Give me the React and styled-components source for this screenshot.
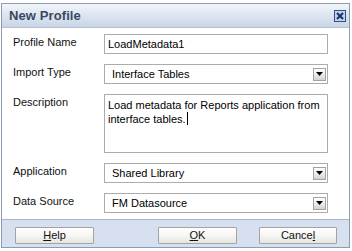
import React from "react";
import styled, { createGlobalStyle } from "styled-components";

const GlobalStyle = createGlobalStyle`
  html, body {
    margin: 0;
    padding: 0;
    background: #ffffff;
  }
  body {
    font-family: "Liberation Sans", Arial, sans-serif;
    font-size: 11px;
    color: #000;
  }
`;

const Dialog = styled.div`
  margin: 3px 0 0 1px;
  width: 347px;
  border: 1px solid #8d9bb3;
  background: #fff;
  display: flex;
  flex-direction: column;
`;

const TitleBar = styled.div`
  height: 23px;
  display: flex;
  align-items: center;
  justify-content: space-between;
  padding: 0 3px 0 7px;
  background: linear-gradient(to bottom, #f2f5fa 0%, #dfe6f1 45%, #c8d4e6 100%);
  border-bottom: 1px solid #b3c0d4;
`;

const Title = styled.span`
  font-size: 13px;
  font-weight: bold;
  color: #3a4862;
  letter-spacing: 0.1px;
`;

const CloseButton = styled.div`
  width: 12px;
  height: 12px;
  display: flex;
`;

const Body = styled.div`
  display: grid;
  grid-template-columns: 91px 224px;
  row-gap: 10px;
  padding: 6px 0 6px 11px;
  align-items: start;
`;

const Label = styled.label`
  line-height: 17px;
  color: #111;
  font-size: 11px;
`;

const TextBox = styled.div`
  box-sizing: border-box;
  height: 20px;
  border: 1px solid #acacac;
  padding: 0 3px;
  display: flex;
  align-items: center;
  font-size: 11px;
`;

const SelectBox = styled(TextBox)`
  padding: 0 1px 0 7px;
  justify-content: space-between;
`;

const AreaBox = styled.div`
  box-sizing: border-box;
  height: 59px;
  border: 1px solid #acacac;
  padding: 3px 3px;
  line-height: 14px;
  font-size: 11px;
`;

const Caret = styled.span`
  display: inline-block;
  width: 1px;
  height: 13px;
  background: #000;
  vertical-align: -2px;
  margin-left: 1px;
`;

const ArrowButton = styled.div`
  box-sizing: border-box;
  width: 13px;
  height: 13px;
  border: 1px solid #a4a4a4;
  background: linear-gradient(to bottom, #ffffff 0%, #eaeaea 55%, #d2d2d2 100%);
  display: flex;
  align-items: center;
  justify-content: center;
`;

const Footer = styled.div`
  display: flex;
  align-items: center;
  gap: 22px;
  padding: 7px 12px 3px 13px;
  background: #d6e0ee;
  border-top: 1px solid #a9b6ca;
`;

const Button = styled.button`
  box-sizing: border-box;
  width: ${(p) => p.w || 79}px;
  height: 17px;
  margin-left: ${(p) => (p.push ? "auto" : "0")};
  border: 1px solid #a3a3a3;
  border-radius: 1px;
  background: linear-gradient(to bottom, #ffffff 0%, #f6f6f4 50%, #e4e4e0 100%);
  font-family: "Liberation Sans", Arial, sans-serif;
  font-size: 11px;
  color: #111;
  padding: 0;
  line-height: 15px;
  text-align: center;
  u {
    text-decoration: underline;
  }
`;

const DownArrow = () => (
  <svg width="7" height="4" viewBox="0 0 7 4">
    <path d="M0 0 H7 L3.5 4 Z" fill="#000" />
  </svg>
);

const Select = ({ value }) => (
  <SelectBox>
    <span>{value}</span>
    <ArrowButton>
      <DownArrow />
    </ArrowButton>
  </SelectBox>
);

export default function App() {
  return (
    <>
      <GlobalStyle />
      <Dialog>
        <TitleBar>
          <Title>New Profile</Title>
          <CloseButton>
            <svg width="12" height="12" viewBox="0 0 12 12">
              <rect x="0.5" y="0.5" width="11" height="11" fill="#c6d4ea" stroke="#2f4f86" />
              <path d="M3 3 L9 9 M9 3 L3 9" stroke="#1c386b" strokeWidth="2.2" />
            </svg>
          </CloseButton>
        </TitleBar>
        <Body>
          <Label>Profile Name</Label>
          <TextBox>LoadMetadata1</TextBox>
          <Label>Import Type</Label>
          <Select value="Interface Tables" />
          <Label>Description</Label>
          <AreaBox>
            Load metadata for Reports application from interface tables.
            <Caret />
          </AreaBox>
          <Label>Application</Label>
          <Select value="Shared Library" />
          <Label>Data Source</Label>
          <Select value="FM Datasource" />
        </Body>
        <Footer>
          <Button>
            <u>H</u>elp
          </Button>
          <Button push>
            <u>O</u>K
          </Button>
          <Button w={78}>
            Cance<u>l</u>
          </Button>
        </Footer>
      </Dialog>
    </>
  );
}
